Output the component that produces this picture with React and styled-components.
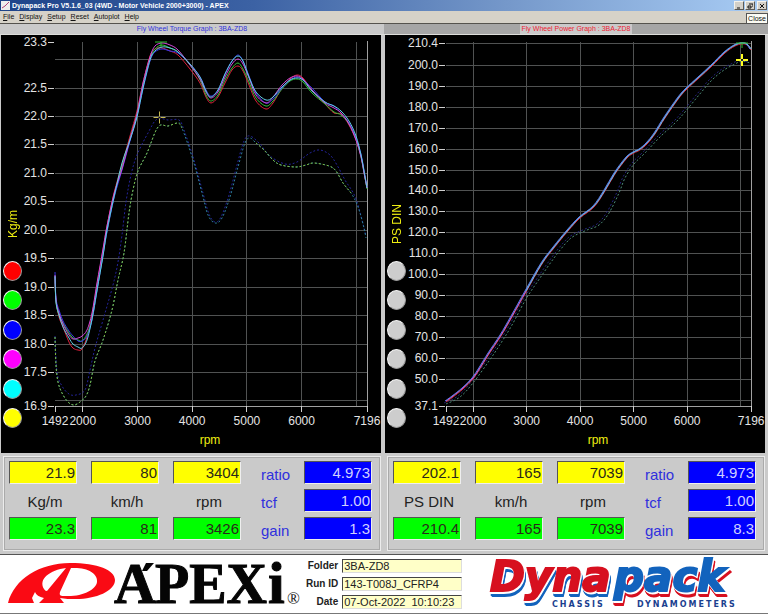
import React from 'react';
import styled, { createGlobalStyle } from 'styled-components';

const GlobalStyle = createGlobalStyle`
  * {
    box-sizing: border-box;
  }
  body {
    margin: 0;
    background: #fff;
    font-family: "Liberation Sans", Arial, sans-serif;
    color: #222;
  }
  button,
  input {
    font-family: inherit;
  }
`;

const Window = styled.div`
  display: flex;
  flex-direction: column;
  background: #cacaca;
`;

const TitleBar = styled.header`
  display: flex;
  align-items: center;
  gap: 2px;
  height: 11px;
  padding: 0 1px;
  background: linear-gradient(90deg, #1d4389 0%, #3c62a4 33%, #7598ca 66%, #a9cdf5 100%);
  h1 {
    flex: 1;
    margin: 0;
    font-size: 7px;
    line-height: 11px;
    color: #fff;
    white-space: nowrap;
  }
`;

const WindowButtons = styled.div`
  display: flex;
  gap: 1px;
`;

const WindowButton = styled.button`
  display: flex;
  align-items: center;
  justify-content: center;
  width: 10px;
  height: 9px;
  padding: 0;
  margin-left: ${props => (props.$apart ? '1px' : '0')};
  border: 1px solid;
  border-color: #f4f2ec #5c5a55 #5c5a55 #f4f2ec;
  background: #d4d0c8;
`;

const MenuBar = styled.nav`
  position: relative;
  display: flex;
  align-items: center;
  gap: 5px;
  height: 13px;
  padding: 0 3px;
  background: #d6d2c8;
  border-bottom: 1px solid #55534e;
`;

const MenuButton = styled.button`
  padding: 0;
  border: 0;
  background: none;
  font-size: 7px;
  line-height: 12px;
  color: #111;
  &::first-letter {
    text-decoration: underline;
  }
`;

const Tooltip = styled.span`
  position: absolute;
  top: 2px;
  right: 0;
  padding: 0 1px;
  border: 1px solid #555;
  background: #fbfbf4;
  font-size: 7px;
  line-height: 9px;
  color: #111;
`;

const Panels = styled.div`
  display: grid;
  grid-template-columns: 1fr 1fr;
  gap: ${props => props.$gap || 0};
  padding: ${props => props.$padding || 0};
`;

const GraphTitle = styled.h2`
  display: flex;
  justify-content: center;
  height: 11px;
  margin: 0;
  border-bottom: 1px solid #dededb;
  background: ${props => (props.$active ? '#a6a6a6' : '#cacaca')};
  font-size: 7px;
  font-weight: normal;
  line-height: 10px;
  color: ${props => (props.$active ? '#ee2233' : '#3333dd')};
  span {
    padding: 0 2px;
    background: #cacaca;
  }
`;

const GraphPanel = styled.section`
  display: flex;
  background: #000;
`;

const Side = styled.div`
  display: flex;
  flex-direction: column;
  justify-content: flex-end;
  align-items: center;
  gap: 17px;
  width: 21px;
  padding: 0 0 25px 2px;
`;

const AxisTitle = styled.div`
  display: flex;
  align-items: center;
  justify-content: center;
  height: 41px;
  writing-mode: vertical-rl;
  transform: rotate(180deg);
  font-size: 12px;
  line-height: 16px;
  white-space: nowrap;
  color: #eeee11;
`;

const RunButtons = styled.div`
  display: flex;
  flex-direction: column;
  justify-content: space-between;
  height: 167px;
`;

const RunButton = styled.button`
  width: 19px;
  height: 20px;
  padding: 0;
  border: 1px solid;
  border-color: #f4f4f4 #999 #999 #f4f4f4;
  border-radius: 50%;
  background: ${props => props.$color};
`;

const Plot = styled.svg`
  display: block;
  flex: 1;
  min-width: 0;
  text {
    font-size: 12px;
    fill: #e4e4e4;
  }
  .unit {
    fill: #eeee11;
  }
  .grid {
    stroke: #505252;
  }
  .axis {
    stroke: #a0a0a0;
  }
  .tick {
    stroke: #d0d0d0;
  }
  path {
    fill: none;
  }
`;

const ReadoutPanel = styled.section`
  display: grid;
  grid-template-columns: repeat(3, minmax(0, 1fr)) 35px minmax(0, 1fr);
  grid-auto-rows: 23px;
  gap: 5px 14px;
  padding: 4px 8px 10px 5px;
  border: 1px solid #ececec;
  outline: 1px solid #aaa;
  outline-offset: -2px;
`;

const Readout = styled.input`
  width: 100%;
  min-width: 0;
  padding: 0 1px;
  border: 1px solid;
  border-color: #555 #eee #eee #555;
  border-radius: 0;
  background: ${props => props.$bg};
  font-size: 15px;
  line-height: 20px;
  text-align: right;
  color: ${props => props.$color || '#2a2a1a'};
`;

const Unit = styled.div`
  padding-left: 4px;
  font-size: 15px;
  line-height: 26px;
  text-align: center;
  white-space: nowrap;
`;

const FactorLabel = styled.label`
  padding-left: 6px;
  font-size: 15px;
  line-height: 27px;
  color: #3030dd;
`;

const Footer = styled.footer`
  display: flex;
  align-items: center;
  gap: 5px;
  height: 60px;
  padding: 0 20px 0 7px;
  border-top: 1px solid #555;
  border-bottom: 1px solid #777;
  background: #fff;
`;

const RunForm = styled.form`
  display: grid;
  grid-template-columns: auto 120px;
  gap: 4px;
  align-items: center;
  margin-right: auto;
  label {
    font-size: 10px;
    font-weight: bold;
    line-height: 14px;
    text-align: right;
    white-space: nowrap;
  }
  input {
    width: 100%;
    height: 14px;
    padding: 0 1px;
    border: 1px solid;
    border-color: #444 #ddd #ddd #444;
    border-radius: 0;
    background: #ffffc8;
    font-size: 11px;
    line-height: 12px;
    color: #222;
  }
`;

const Logo = styled.svg`
  display: block;
  flex: none;
  overflow: visible;
`;

const LogoWord = styled.text`
  font-family: "DejaVu Sans", sans-serif;
  font-size: 42px;
  font-weight: bold;
  font-style: italic;
  fill: ${props => props.$color};
  stroke: ${props => props.$color};
  stroke-width: 2px;
  filter: drop-shadow(0 1px 0 #fff) drop-shadow(1px 1px 0 #fff) drop-shadow(1px 3px 0 ${props => props.$shadow});
`;

const COLORS = {
  red: '#e0203c',
  green: '#35c53c',
  blue: '#3535e6',
  magenta: '#d548dc',
  cyan: '#62cfe6'
};

// torque: x, then y for red, green, blue, magenta, cyan
const torqueRuns = [
  [55, 277, 277, 272, 275, 276],
  [56, 300, 302, 298, 300, 302],
  [59, 317, 315, 310, 313, 315],
  [63, 327, 323, 321, 324, 327],
  [69, 342, 333, 331, 335, 338],
  [73, 348, 338, 336, 339, 344],
  [78, 350, 340, 341, 338, 347],
  [82, 349, 341, 341, 336, 348],
  [87, 337, 334, 336, 330, 340],
  [92, 315, 319, 320, 313, 319],
  [97, 285, 290, 291, 283, 290],
  [103, 250, 254, 255, 249, 256],
  [107, 226, 231, 232, 226, 230],
  [114, 193, 197, 198, 194, 197],
  [122, 165, 167, 170, 169, 163],
  [130, 136, 139, 141, 139, 140],
  [137, 111, 114, 116, 114, 117],
  [143, 83, 86, 89, 83, 88],
  [150, 56, 59, 61, 57, 60],
  [155, 49, 49, 52, 46, 51],
  [162, 48, 45, 49, 43, 47],
  [170, 51, 48, 51, 45, 48],
  [178, 55, 52, 53, 50, 52],
  [190, 69, 65, 64, 65, 64],
  [200, 83, 80, 77, 79, 77],
  [206, 97, 95, 90, 92, 91],
  [211, 103, 101, 96, 98, 97],
  [218, 97, 95, 90, 92, 90],
  [225, 83, 80, 74, 77, 74],
  [232, 70, 68, 61, 64, 61],
  [238, 66, 63, 55, 59, 56],
  [243, 71, 69, 61, 64, 61],
  [249, 85, 82, 76, 78, 77],
  [256, 101, 98, 93, 95, 92],
  [266, 109, 106, 103, 103, 100],
  [273, 103, 101, 99, 97, 97],
  [282, 88, 89, 88, 85, 87],
  [290, 79, 81, 80, 78, 80],
  [297, 75, 79, 77, 76, 78],
  [303, 78, 82, 80, 79, 80],
  [312, 90, 93, 88, 90, 91],
  [325, 104, 104, 102, 103, 102],
  [334, 113, 112, 106, 108, 106],
  [341, 114, 115, 113, 113, 111],
  [349, 125, 124, 123, 124, 121],
  [356, 140, 139, 138, 140, 136],
  [361, 156, 156, 154, 157, 155],
  [364, 172, 172, 170, 173, 171],
  [367, 188, 189, 187, 188, 188]
];

const torqueBase = [
  [55, 337], [56, 365], [58, 382], [62, 393], [68, 402], [74, 405], [80, 402], [86, 396],
  [90, 385], [95, 361], [103, 340], [112, 310], [118, 280], [124, 253], [129, 213], [133, 190],
  [138, 171], [147, 153], [158, 127], [168, 126], [178, 123], [182, 128], [193, 160], [202, 193],
  [208, 215], [215, 223], [222, 218], [230, 197], [238, 167], [245, 143], [250, 138], [256, 143],
  [264, 150], [273, 160], [281, 165], [296, 167], [306, 165], [314, 163], [329, 166], [336, 171],
  [343, 183], [351, 193], [356, 202], [360, 213], [364, 228], [366, 238]
];

const torqueBaseBlue = [
  [55, 336], [57, 372], [62, 386], [69, 394], [76, 395], [85, 390], [90, 370], [95, 348],
  [103, 320], [113, 285], [118, 262], [122, 235], [126, 202], [131, 175], [137, 155], [148, 133],
  [157, 119], [168, 120], [179, 120], [184, 130], [194, 160], [203, 193], [209, 214], [215, 222],
  [221, 217], [229, 195], [237, 165], [244, 141], [250, 136], [260, 144], [270, 156], [285, 164],
  [297, 162], [310, 153], [320, 150], [330, 155], [337, 165], [345, 180], [356, 199], [366, 236]
];

const power = [
  [62, 401], [69, 396], [79, 388], [89, 378], [97, 366], [105, 353], [117, 335], [128, 316],
  [142, 291], [158, 263], [170, 247], [184, 230], [196, 217], [210, 206], [221, 190], [231, 173],
  [243, 157], [250, 152], [256, 149], [263, 143], [271, 133], [281, 117], [295, 97], [303, 88],
  [315, 77], [328, 65], [341, 52], [351, 45], [358, 43], [363, 44], [367, 49]
];

const powerBase = [
  [62, 404], [76, 397], [89, 383], [105, 361], [117, 343], [128, 325], [142, 299], [156, 278],
  [170, 258], [182, 243], [190, 236], [203, 230], [215, 225], [225, 213], [235, 193], [241, 178],
  [250, 164], [261, 153], [276, 137], [291, 123], [301, 112], [315, 95], [328, 80], [340, 70],
  [351, 64], [358, 61], [366, 63]
];

const shift = (points, dx, dy) => points.map(([x, y]) => [x + dx, y + dy]);

// Catmull-Rom through the samples
const curve = points =>
  points.reduce((d, p, i) => {
    if (i === 0) return `M${p[0]} ${p[1]}`;
    const a = points[i - 2] || points[i - 1];
    const b = points[i - 1];
    const n = points[i + 1] || p;
    return `${d}C${b[0] + (p[0] - a[0]) / 6} ${b[1] + (p[1] - a[1]) / 6} ${p[0] - (n[0] - b[0]) / 6} ${p[1] - (n[1] - b[1]) / 6} ${p[0]} ${p[1]}`;
  }, '');

const graphs = [
  {
    id: 'torque',
    title: 'Fly Wheel Torque Graph : 3BA-ZD8',
    unit: 'Kg/m',
    left: 55,
    perRpm: 0.0547,
    max: 23.3,
    min: 16.9,
    top: 42,
    perUnit: 56.9,
    grid: [23, 22.5, 22, 21.5, 21, 20.5, 20, 19.5, 19, 18.5, 18, 17.5, 17],
    hidden: [23, 17],
    unitX: 210,
    buttons: ['#f00', '#0f0', '#00f', '#f0f', '#0ff', '#ff0'],
    lines: Object.keys(COLORS).map((name, i) => ({
      color: COLORS[name],
      points: torqueRuns.map(row => [row[0], row[i + 1]])
    })),
    dashed: [
      { color: '#24249a', points: torqueBaseBlue },
      { color: '#2b7f98', points: torqueBase },
      { color: '#7cb83c', points: torqueBase.slice(0, 22) },
      { color: '#7cb83c', points: torqueBase.slice(31, 42) }
    ],
    peak: [161, 42],
    cursor: [159.5, 117.5],
    cursorColor: '#c4b850'
  },
  {
    id: 'power',
    active: true,
    title: 'Fly Wheel Power Graph : 3BA-ZD8',
    unit: 'PS DIN',
    left: 62,
    perRpm: 0.0535,
    max: 210.4,
    min: 37.1,
    top: 43,
    perUnit: 2.095,
    grid: [200, 190, 180, 170, 160, 150, 140, 130, 120, 110, 100, 90, 80, 70, 60, 50, 40],
    hidden: [40],
    unitX: 214,
    buttons: Array(6).fill('#cdcdcd'),
    lines: [
      { color: COLORS.red, points: shift(power, 0, 1) },
      { color: COLORS.green, points: power },
      { color: COLORS.magenta, points: power },
      { color: '#5a78f0', points: shift(power, -1, 0) },
      { color: '#58b8dc', points: power.slice(8) }
    ],
    dashed: [
      { color: '#24247c', points: shift(powerBase, -2, -1) },
      { color: '#4c8a78', points: powerBase }
    ],
    peak: [358, 43],
    cursor: [358, 60],
    cursorColor: '#ffff20',
    bold: true
  }
];

const readouts = [
  {
    id: 'torque',
    units: ['Kg/m', 'km/h', 'rpm'],
    cursor: ['21.9', '80', '3404'],
    peak: ['23.3', '81', '3426'],
    factors: ['4.973', '1.00', '1.3']
  },
  {
    id: 'power',
    units: ['PS DIN', 'km/h', 'rpm'],
    cursor: ['202.1', '165', '7039'],
    peak: ['210.4', '165', '7039'],
    factors: ['4.973', '1.00', '8.3']
  }
];

const Graph = ({ graph }) => {
  const xAt = rpm => graph.left + (rpm - 1492) * graph.perRpm;
  const yAt = value => Math.round(graph.top + (graph.max - value) * graph.perUnit);
  const right = xAt(7196);
  const bottom = 406;
  const labels = [graph.max, ...graph.grid.filter(v => !graph.hidden.includes(v)), graph.min];
  const [cx, cy] = graph.cursor;
  const [px, py] = graph.peak;
  return (
    <Plot viewBox="22 35 359 418" role="img" aria-label={graph.title}>
      <g shapeRendering="crispEdges">
        {graph.grid.map(v => (
          <line key={v} className="grid" x1={graph.left} x2={right} y1={yAt(v)} y2={yAt(v)} />
        ))}
        {graph.id === 'power' && (
          <line className="grid" x1={graph.left} x2={right} y1={43} y2={43} />
        )}
        {[2000, 3000, 4000, 5000, 6000, 7000].map(v => (
          <line key={v} className="grid" x1={xAt(v)} x2={xAt(v)} y1={42} y2={bottom} />
        ))}
        <line className="axis" x1={right} x2={right} y1={41} y2={bottom} />
        <line className="axis" x1={graph.left} x2={right} y1={bottom} y2={bottom} />
        {labels.map(v => (
          <line key={v} className="tick" x1={graph.left - 7} x2={graph.left - 1} y1={yAt(v)} y2={yAt(v)} />
        ))}
        {[1492, 2000, 3000, 4000, 5000, 6000, 7196].map(v => (
          <line key={v} className="tick" x1={xAt(v)} x2={xAt(v)} y1={bottom} y2={bottom + 6} />
        ))}
      </g>
      {labels.map(v => (
        <text key={v} x={graph.left - 8} y={yAt(v) + 4} textAnchor="end">{v.toFixed(1)}</text>
      ))}
      {[1492, 2000, 3000, 4000, 5000, 6000, 7196].map(v => (
        <text key={v} x={xAt(v)} y={425} textAnchor="middle">{v}</text>
      ))}
      <text className="unit" x={graph.unitX} y={444} textAnchor="middle">rpm</text>
      {graph.dashed.map((line, i) => (
        <path key={i} d={curve(line.points)} stroke={line.color} strokeDasharray="2 2" />
      ))}
      {graph.lines.map((line, i) => (
        <path key={i} d={curve(line.points)} stroke={line.color} />
      ))}
      <path d={`M${px - 6} ${py}h12M${px} ${py}v5`} stroke="#2fc02f" />
      <path
        d={`M${cx - 6} ${cy}h5m2 0h5M${cx} ${cy - 6}v5m0 2v5`}
        stroke={graph.cursorColor}
        strokeWidth={graph.bold ? 2 : 1}
      />
    </Plot>
  );
};

const ReadoutGroup = ({ data }) => (
  <ReadoutPanel>
    {data.cursor.map((v, i) => (
      <Readout key={i} readOnly value={v} $bg="#ff0" aria-label={`Cursor ${data.units[i]}`} />
    ))}
    <FactorLabel htmlFor={`${data.id}-ratio`}>ratio</FactorLabel>
    <Readout id={`${data.id}-ratio`} readOnly value={data.factors[0]} $bg="#00f" $color="#d0d0ff" />
    {data.units.map(u => <Unit key={u}>{u}</Unit>)}
    <FactorLabel htmlFor={`${data.id}-tcf`}>tcf</FactorLabel>
    <Readout id={`${data.id}-tcf`} readOnly value={data.factors[1]} $bg="#00f" $color="#d0d0ff" />
    {data.peak.map((v, i) => (
      <Readout key={i} readOnly value={v} $bg="#0f0" aria-label={`Peak ${data.units[i]}`} />
    ))}
    <FactorLabel htmlFor={`${data.id}-gain`}>gain</FactorLabel>
    <Readout id={`${data.id}-gain`} readOnly value={data.factors[2]} $bg="#00f" $color="#d0d0ff" />
  </ReadoutPanel>
);

const ApexLogo = () => (
  <Logo width="294" height="50" viewBox="7 560 294 50" role="img" aria-label="A'PEXi">
    <path
      fill="#fa0a14"
      fillRule="evenodd"
      d="M8 604C14 580 40 564 70 564C98 564 115 571 115 581C115 592 96 600 76 600C70 600 65 600 60 599L64 604H39L44 599C39 598 36 596 35 593L32 599L34 604ZM44 590C38 580 50 571 66 569L47 592C45 592 45 591 44 590ZM71 569C87 568 98 574 97 583C96 591 82 598 65 597C61 597 59 597 60 593Z"
    />
    <g fontFamily="Liberation Serif, serif" fontWeight="bold" fill="#050505" stroke="#050505" strokeWidth="1">
      <text x="114" y="604" fontSize="58">A</text>
      <text x="155" y="604" fontSize="56">PEX</text>
      <text x="268" y="604" fontSize="60">i</text>
    </g>
    <path fill="#050505" d="M146 564H154L147 572H142Z" />
    <text x="287" y="605" fontFamily="Liberation Serif, serif" fontSize="17" fill="#111">®</text>
  </Logo>
);

const DynapackLogo = () => (
  <Logo width="262" height="52" viewBox="486 558 262 52" role="img" aria-label="Dynapack Chassis Dynamometers">
    <LogoWord x="490" y="591" $color="#d7101f" $shadow="#1263bd">Dyna</LogoWord>
    <LogoWord x="614" y="591" $color="#1263bd" $shadow="#d7101f">pack</LogoWord>
    <g fontFamily="DejaVu Sans, sans-serif" fontWeight="bold" fontSize="8" fill="#1b3f8f" letterSpacing="2">
      <text x="552" y="607">CHASSIS</text>
      <text x="637" y="607">DYNAMOMETERS</text>
    </g>
  </Logo>
);

const App = () => (
  <Window>
    <GlobalStyle />
    <TitleBar>
      <svg width="9" height="9" viewBox="0 0 9 9" aria-hidden="true">
        <rect width="9" height="9" fill="#eee" />
        <path d="M1 7L4 5L8 1" stroke="#b0447a" fill="none" />
      </svg>
      <h1>Dynapack Pro V5.1.6_03 (4WD - Motor Vehicle 2000+3000) - APEX</h1>
      <WindowButtons>
        <WindowButton aria-label="Minimize">
          <svg width="6" height="6"><path d="M1 5h3" stroke="#111" /></svg>
        </WindowButton>
        <WindowButton aria-label="Restore">
          <svg width="6" height="6"><path d="M2 1h4v3M1 3h3v2h-3z" stroke="#111" fill="none" /></svg>
        </WindowButton>
        <WindowButton $apart aria-label="Close">
          <svg width="6" height="6"><path d="M1 1l4 4M5 1l-4 4" stroke="#111" /></svg>
        </WindowButton>
      </WindowButtons>
    </TitleBar>
    <MenuBar>
      {['File', 'Display', 'Setup', 'Reset', 'Autoplot', 'Help'].map(item => (
        <MenuButton key={item}>{item}</MenuButton>
      ))}
      <Tooltip role="tooltip">Close</Tooltip>
    </MenuBar>
    <Panels>
      {graphs.map(g => (
        <GraphTitle key={g.id} $active={g.active}><span>{g.title}</span></GraphTitle>
      ))}
    </Panels>
    <Panels $gap="4px" $padding="0 3px 0 1px">
      {graphs.map(g => (
        <GraphPanel key={g.id}>
          <Side>
            <AxisTitle>{g.unit}</AxisTitle>
            <RunButtons>
              {g.buttons.map((color, i) => (
                <RunButton key={i} $color={color} aria-label={`Run ${i + 1}`} />
              ))}
            </RunButtons>
          </Side>
          <Graph graph={g} />
        </GraphPanel>
      ))}
    </Panels>
    <Panels $gap="6px" $padding="3px">
      {readouts.map(r => <ReadoutGroup key={r.id} data={r} />)}
    </Panels>
    <Footer>
      <ApexLogo />
      <RunForm>
        <label htmlFor="folder">Folder</label>
        <input id="folder" defaultValue="3BA-ZD8" />
        <label htmlFor="run-id">Run ID</label>
        <input id="run-id" defaultValue="143-T008J_CFRP4" />
        <label htmlFor="date">Date</label>
        <input id="date" defaultValue="07-Oct-2022  10:10:23" />
      </RunForm>
      <DynapackLogo />
    </Footer>
  </Window>
);

export default App;
